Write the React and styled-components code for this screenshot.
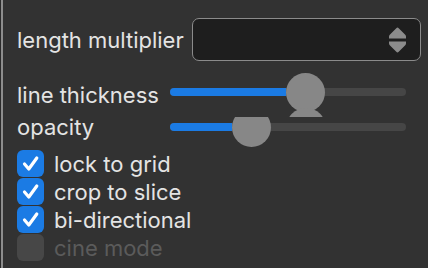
import React from 'react';
import styled, { createGlobalStyle } from 'styled-components';

const GlobalStyle = createGlobalStyle`
  html, body {
    margin: 0;
    padding: 0;
    background: #323232;
  }
  body {
    font-family: Inter, "Noto Sans", sans-serif;
    -webkit-font-smoothing: antialiased;
  }
`;

const Panel = styled.div`
  width: 428px;
  height: 268px;
  box-sizing: border-box;
  background: #323232;
  border-left: 1px solid #2a2a2a;
  box-shadow: inset 2px 0 0 #8d8d8d;
  padding: 18px 7px 0 16px;
  overflow: hidden;
  color: #e4e4e4;
`;

const Label = styled.span`
  font-size: 22px;
  line-height: 26px;
  white-space: nowrap;
  flex-shrink: 0;
  margin-top: ${(p) => p.$offset || 0}px;
  color: ${(p) => (p.$disabled ? '#5b5b5b' : '#e4e4e4')};
`;

const SelectRow = styled.div`
  display: flex;
  align-items: center;
  height: 43px;
`;

const SelectBox = styled.div`
  margin-left: auto;
  width: 229px;
  height: 43px;
  box-sizing: border-box;
  border: 1.5px solid #8b8b8b;
  border-radius: 7px;
  background: #1e1e1e;
  display: flex;
  align-items: center;
  justify-content: flex-end;
  padding-right: 14px;
`;

const SliderRow = styled.div`
  display: flex;
  align-items: flex-start;
  height: ${(p) => p.$height}px;
  margin-top: ${(p) => p.$gap || 0}px;
`;

const SliderArea = styled.div`
  position: relative;
  margin-left: auto;
  margin-right: 15px;
  width: 236px;
  height: 100%;
  overflow: hidden;
`;

const Track = styled.div`
  position: absolute;
  left: 0;
  right: 0;
  top: ${(p) => p.$top}px;
  height: 8px;
  border-radius: 4px;
  background: #464646;
  overflow: hidden;
`;

const TrackFill = styled.div`
  height: 100%;
  background: #1b7be4;
`;

const Thumb = styled.div`
  position: absolute;
  width: ${(p) => p.$size}px;
  height: ${(p) => p.$size}px;
  border-radius: 50%;
  background: #878787;
`;

const CheckList = styled.div`
  display: flex;
  flex-direction: column;
  gap: 1px;
  margin-top: 2px;
`;

const CheckRow = styled.label`
  display: flex;
  align-items: center;
  gap: 10px;
  height: 27px;
`;

const Box = styled.span`
  width: 27px;
  height: 27px;
  border-radius: 6px;
  flex-shrink: 0;
  display: flex;
  align-items: center;
  justify-content: center;
  background: ${(p) => (p.$disabled ? '#474747' : '#1b7be4')};
`;

const Stepper = () => (
  <svg width="17" height="26" viewBox="0 0 17 26">
    <path d="M7.3 1.2 Q8.5 0 9.7 1.2 L16 7.5 Q17 8.5 17 9.5 L17 11.5 L0 11.5 L0 9.5 Q0 8.5 1 7.5 Z" fill="#8b8b8b" />
    <path d="M7.3 24.8 Q8.5 26 9.7 24.8 L16 18.5 Q17 17.5 17 16.5 L17 14.5 L0 14.5 L0 16.5 Q0 17.5 1 18.5 Z" fill="#8b8b8b" />
  </svg>
);

const Check = () => (
  <svg width="27" height="27" viewBox="0 0 27 27">
    <path d="M7.5 14 L11.8 19 L19.8 8" fill="none" stroke="#fff" strokeWidth="3.2" strokeLinecap="round" strokeLinejoin="round" />
  </svg>
);

const Slider = ({ value, trackTop, thumbTop, ghostTop }) => (
  <SliderArea>
    <Track $top={trackTop}>
      <TrackFill style={{ width: value }} />
    </Track>
    <Thumb $size={39} style={{ left: value, top: thumbTop }} />
    {ghostTop !== undefined && <Thumb $size={40} style={{ left: value, top: ghostTop }} />}
  </SliderArea>
);

const options = [
  { label: 'lock to grid', checked: true },
  { label: 'crop to slice', checked: true },
  { label: 'bi-directional', checked: true },
  { label: 'cine mode', disabled: true },
];

export default function App() {
  return (
    <>
      <GlobalStyle />
      <Panel>
        <SelectRow>
          <Label>length multiplier</Label>
          <SelectBox>
            <Stepper />
          </SelectBox>
        </SelectRow>

        <SliderRow $height={44} $gap={12}>
          <Label $offset={9}>line thickness</Label>
          <Slider value={116} trackTop={15} thumbTop={-0.5} ghostTop={34.5} />
        </SliderRow>

        <SliderRow $height={31}>
          <Label $offset={-3.5}>opacity</Label>
          <Slider value={62} trackTop={6} thumbTop={-9} />
        </SliderRow>

        <CheckList>
          {options.map((o) => (
            <CheckRow key={o.label}>
              <Box $disabled={o.disabled}>{o.checked && <Check />}</Box>
              <Label $disabled={o.disabled}>{o.label}</Label>
            </CheckRow>
          ))}
        </CheckList>
      </Panel>
    </>
  );
}
